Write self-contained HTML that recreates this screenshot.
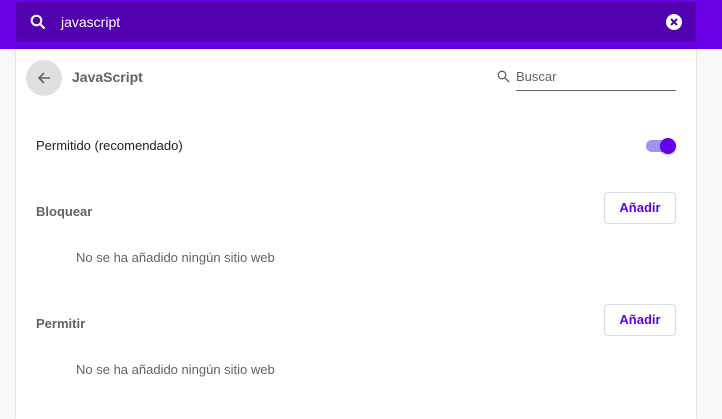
<!DOCTYPE html><html><head><style>
body{margin:0;width:722px;height:408px;overflow:hidden;background:#f8f9fa;font-family:"Liberation Sans",sans-serif;position:relative}
.top{position:absolute;left:0;top:0;width:722px;height:49px;background:#6a00e3}
.sb{position:absolute;left:16px;top:2px;width:680px;height:40px;background:#5300b0;border-radius:2px}
.card{position:absolute;left:16px;top:49px;width:680px;height:370px;background:#fff;box-shadow:0 0 2px rgba(0,0,0,.25)}
.t{position:absolute;white-space:nowrap}
.btn{position:absolute;left:588px;width:72px;height:32px;border:1px solid #dadce0;border-radius:4px;color:#6200ea;font-weight:bold;font-size:13px;text-align:center;line-height:30px;box-sizing:border-box}
</style></head><body>
<div class="top"><div class="sb">
<svg style="position:absolute;left:14px;top:12px" width="16" height="16" viewBox="0 0 16 16"><circle cx="6.5" cy="6.5" r="4.8" fill="none" stroke="#fff" stroke-width="2"/><path d="M10 10l4.5 4.5" stroke="#fff" stroke-width="2"/></svg>
<div class="t" style="left:45px;top:12px;color:#fff;font-size:14px">javascript</div>
<svg style="position:absolute;left:650px;top:12px" width="16" height="16" viewBox="0 0 16 16"><circle cx="8" cy="8" r="8" fill="#fff"/><path d="M5 5l6 6M11 5l-6 6" stroke="#5300b0" stroke-width="2"/></svg>
</div></div>
<div class="card">
<div style="position:absolute;left:10px;top:11px;width:36px;height:36px;border-radius:50%;background:#e0e0e0"></div>
<svg style="position:absolute;left:20px;top:21px" width="16" height="16" viewBox="0 0 16 16"><path d="M14 8H3M8 3L3 8l5 5" fill="none" stroke="#5f6368" stroke-width="1.6"/></svg>
<div class="t" style="left:56px;top:20px;font-size:14px;font-weight:bold;color:#5f6368">JavaScript</div>
<svg style="position:absolute;left:481px;top:21px" width="13" height="13" viewBox="0 0 13 13"><circle cx="5" cy="5" r="3.8" fill="none" stroke="#5f6368" stroke-width="1.3"/><path d="M8 8l4 4" stroke="#5f6368" stroke-width="1.4"/></svg>
<div class="t" style="left:500px;top:20px;font-size:13px;color:#5f6368">Buscar</div>
<div style="position:absolute;left:500px;top:41px;width:160px;height:1px;background:#5f6368"></div>
<div class="t" style="left:20px;top:89px;font-size:13px;color:#202124">Permitido (recomendado)</div>
<div style="position:absolute;left:630px;top:91px;width:26px;height:12px;border-radius:6px;background:#a093f5"></div>
<div style="position:absolute;left:644px;top:89px;width:16px;height:16px;border-radius:50%;background:#6200ea;box-shadow:0 1px 2px rgba(0,0,0,.3)"></div>
<div class="t" style="left:20px;top:155px;font-size:13px;font-weight:bold;color:#5f6368">Bloquear</div>
<div class="btn" style="top:143px">Añadir</div>
<div class="t" style="left:60px;top:201px;font-size:13px;color:#5f6368">No se ha añadido ningún sitio web</div>
<div class="t" style="left:20px;top:267px;font-size:13px;font-weight:bold;color:#5f6368">Permitir</div>
<div class="btn" style="top:255px">Añadir</div>
<div class="t" style="left:60px;top:313px;font-size:13px;color:#5f6368">No se ha añadido ningún sitio web</div>
</div>
</body></html>
